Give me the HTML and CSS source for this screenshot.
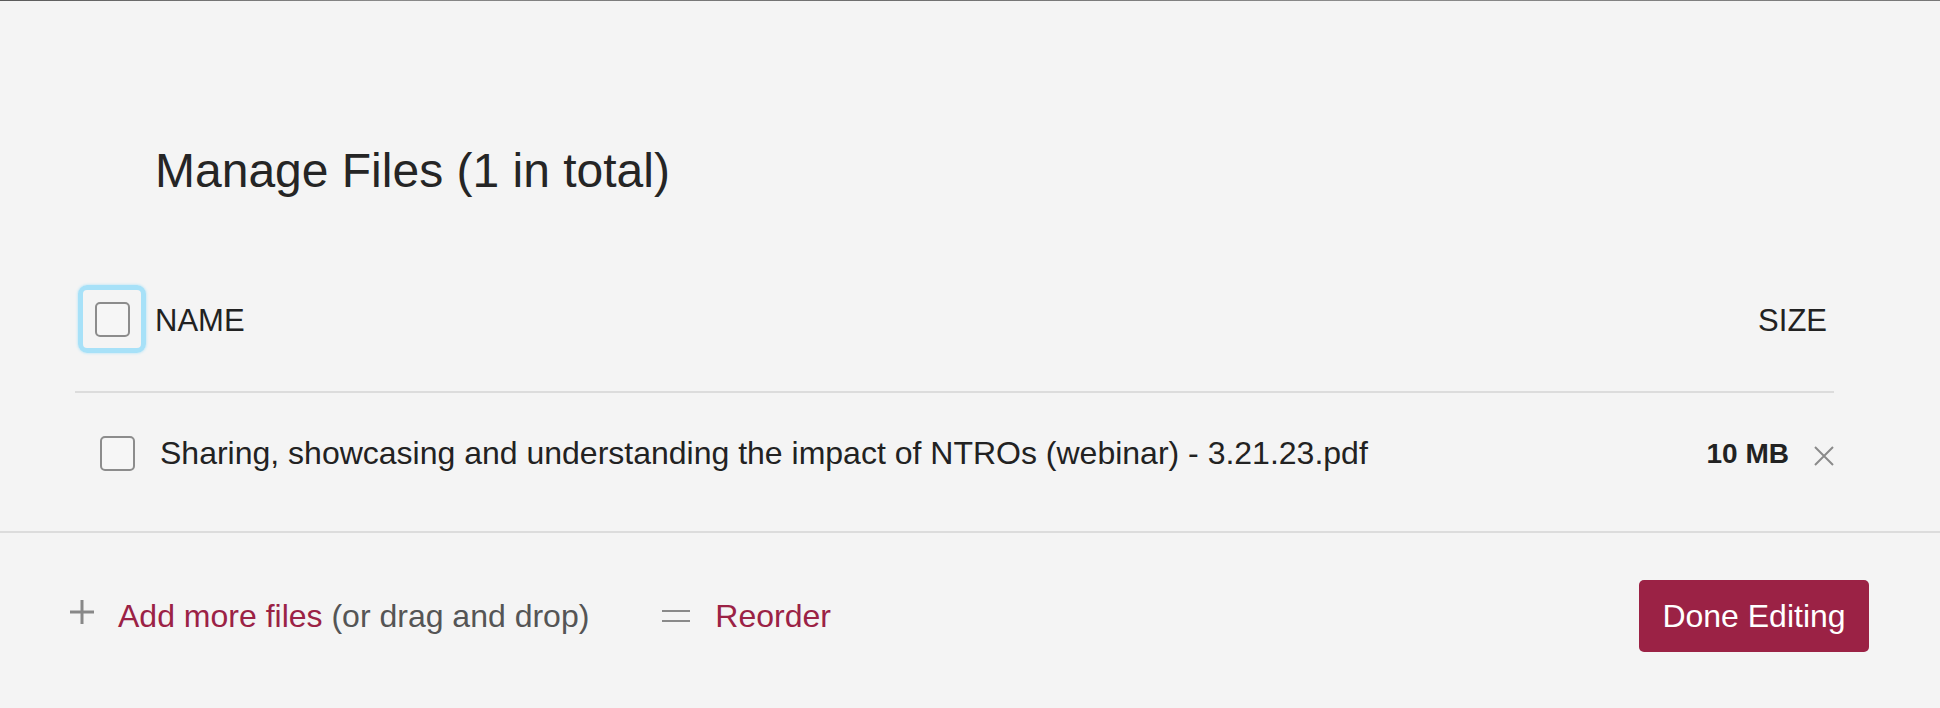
FILE: index.html
```html
<!DOCTYPE html>
<html lang="en">
<head>
    <meta charset="UTF-8">
    <meta name="viewport" content="width=device-width, initial-scale=1.0">
    <title>Manage Files</title>
    <link rel="stylesheet" href="styles.css">
</head>
<body>
    <div class="top-edge"></div>

    <main class="manager">
        <section class="files">
            <h1 class="title">Manage Files (1 in total)</h1>

            <!-- Table header -->
            <div class="table-head">
                <div class="check-focus">
                    <input type="checkbox" class="check" aria-label="Select all">
                </div>
                <span class="head-label head-name">NAME</span>
                <span class="head-label">SIZE</span>
            </div>

            <!-- File rows -->
            <div class="file-row">
                <input type="checkbox" class="check" aria-label="Select file">
                <span class="file-name">Sharing, showcasing and understanding the impact of NTROs (webinar) - 3.21.23.pdf</span>
                <span class="file-size">10 MB</span>
                <button class="remove-btn" aria-label="Remove file">
                    <svg width="20" height="20" viewBox="0 0 20 20">
                        <path d="M1 1 L19 19 M19 1 L1 19" stroke="#8a8a8a" stroke-width="2" fill="none"/>
                    </svg>
                </button>
            </div>
        </section>

        <footer class="actions">
            <div class="add-files">
                <svg class="plus-icon" width="24" height="24" viewBox="0 0 24 24">
                    <path d="M12 0 V24 M0 12 H24" stroke="#888" stroke-width="3" fill="none"/>
                </svg>
                <a href="#" class="link">Add more files</a>
                <span class="hint">&nbsp;(or drag and drop)</span>
            </div>
            <div class="reorder">
                <svg width="28" height="12" viewBox="0 0 28 12">
                    <path d="M0 1 H28 M0 11 H28" stroke="#8a8a8a" stroke-width="2" fill="none"/>
                </svg>
                <a href="#" class="link">Reorder</a>
            </div>
            <button class="done-btn">Done Editing</button>
        </footer>
    </main>
</body>
</html>
```

FILE: styles.css
```css
* {
    box-sizing: border-box;
}

body {
    margin: 0;
    padding: 0;
    background-color: #f4f4f4;
    font-family: "Liberation Sans", Arial, Helvetica, sans-serif;
    color: #222;
}

.top-edge {
    height: 1px;
    background: linear-gradient(to right, #5a5a5a 0%, #8a8a8a 20%, #6e6e6e 45%, #8c8c8c 70%, #777 100%);
}

.files {
    padding: 142px 106px 0 75px;
}

.title {
    margin: 0 0 0 80px;
    font-size: 48px;
    font-weight: normal;
    line-height: 56px;
    color: #252525;
}

.table-head {
    display: flex;
    align-items: center;
    margin-top: 86px;
    padding: 0 7px 38px 3px;
    border-bottom: 2px solid #dcdcdc;
}

.check-focus {
    width: 68px;
    height: 68px;
    border: 5px solid #a7e1f8;
    border-radius: 9px;
    box-shadow: 0 0 3px #a7e1f8;
    display: flex;
    justify-content: center;
    align-items: center;
}

.check {
    appearance: none;
    -webkit-appearance: none;
    width: 35px;
    height: 35px;
    margin: 0;
    border: 2px solid #8c8c8c;
    border-radius: 5px;
    background-color: #f6f6f6;
    flex-shrink: 0;
}

.head-label {
    font-size: 31px;
    padding-top: 4px;
    color: #222;
}

.head-name {
    margin-left: 9px;
    flex: 1;
}

.file-row {
    display: flex;
    align-items: center;
    padding: 42px 0 59px 25px;
}

.file-name {
    flex: 1;
    margin-left: 25px;
    font-size: 32px;
    color: #222;
}

.file-size {
    font-size: 28px;
    font-weight: bold;
    color: #222;
}

.remove-btn {
    margin-left: 25px;
    padding: 0;
    border: none;
    background: none;
    width: 20px;
    height: 20px;
    margin-top: 5px;
    cursor: pointer;
}

.remove-btn svg {
    display: block;
}

.actions {
    display: flex;
    align-items: center;
    border-top: 2px solid #dcdcdc;
    padding: 47px 71px 57px 70px;
    font-size: 32px;
}

.add-files {
    display: flex;
    align-items: center;
}

.plus-icon {
    margin-right: 24px;
    margin-bottom: 8px;
}

.link {
    color: #9b2245;
    text-decoration: none;
}

.hint {
    color: #555;
}

.reorder {
    display: flex;
    align-items: center;
    gap: 25px;
    margin-left: 73px;
    flex: 1;
}

.done-btn {
    width: 230px;
    height: 72px;
    border: none;
    border-radius: 5px;
    background-color: #9b2245;
    color: white;
    font-family: inherit;
    font-size: 32px;
    cursor: pointer;
}

.done-btn:hover {
    background-color: #861c3b;
}
```
